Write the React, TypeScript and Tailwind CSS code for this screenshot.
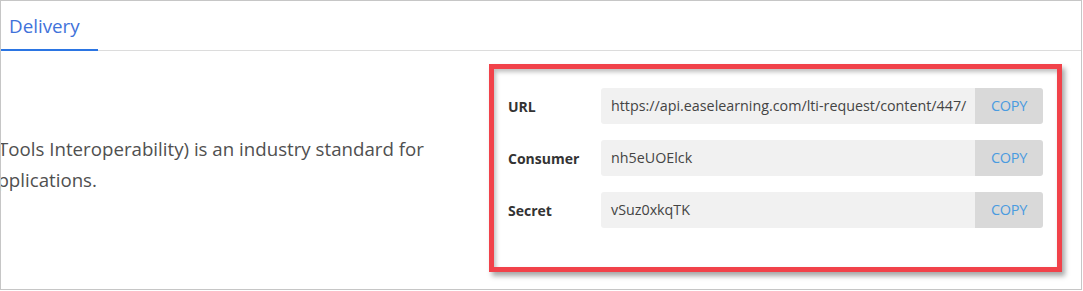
import React from 'react';

const credentials = [
  { label: 'URL', value: 'https://api.easelearning.com/lti-request/content/447/' },
  { label: 'Consumer', value: 'nh5eUOElck' },
  { label: 'Secret', value: 'vSuz0xkqTK' },
];

const CredentialRow = ({ label, value }: { label: string; value: string }) => (
  <div className="flex items-center h-[36px]">
    <div className="w-[93px] text-[14px] font-bold text-[#333]">{label}</div>
    <div className="flex flex-1 h-full">
      <div className="flex-1 flex items-center bg-[#f1f1f1] rounded-l-[3px] pl-[10px] text-[14.3px] text-[#444] whitespace-nowrap overflow-hidden">
        {value}
      </div>
      <button className="w-[68px] bg-[#d9d9d9] rounded-r-[3px] text-[14.5px] text-[#4a9be0] tracking-tight">
        COPY
      </button>
    </div>
  </div>
);

export default function App() {
  return (
    <div className="w-[1083px] h-[291px] bg-white" style={{ fontFamily: '"Open Sans", "Noto Sans", sans-serif' }}>
      <div className="w-[1082px] h-[290px] border border-[#c6c6c6] overflow-hidden">
        {/* tabs */}
        <div className="flex h-[50px] border-b border-[#dcdcdc]">
          <div className="w-[97px] h-[50px] -mb-px pl-[8px] pt-[11px] text-[18.8px] text-[#3f72da] border-b-2 border-[#2b75e3]">
            Delivery
          </div>
        </div>

        <div className="flex">
          <div className="w-[488px] overflow-hidden pt-[82px] text-[18.7px] leading-[31px] text-[#505050]">
            <div className="whitespace-nowrap -ml-[3px]">Tools Interoperability) is an industry standard for</div>
            <div className="whitespace-nowrap -ml-[14px]">applications.</div>
          </div>

          <div className="mt-[13px] w-[573px] h-[208px] border-[5px] border-[#f1424a] shadow-[3px_4px_5px_rgba(0,0,0,0.35),inset_2px_3px_4px_rgba(0,0,0,0.25)]">
            <div className="flex flex-col gap-[16px] pt-[19px] px-[14px]">
              {credentials.map((c) => (
                <CredentialRow key={c.label} label={c.label} value={c.value} />
              ))}
            </div>
          </div>
        </div>
      </div>
    </div>
  );
}
